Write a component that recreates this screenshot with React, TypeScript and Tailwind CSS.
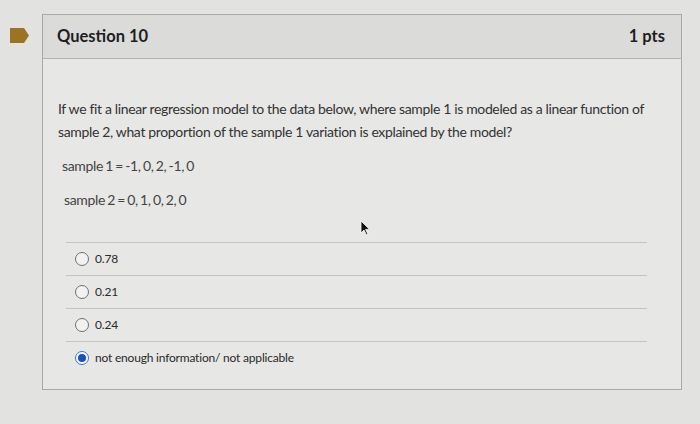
import { useState } from 'react';

const answers = ['0.78', '0.21', '0.24', 'not enough information/ not applicable'];

const Radio = ({ checked }: { checked: boolean }) => (
    <span
        className={`flex h-[14px] w-[14px] shrink-0 items-center justify-center rounded-full border ${checked ? 'border-[#3b6fd6] bg-white' : 'border-[#707070] bg-[#f2f2f0]'}`}
    >
        {checked && <span className="h-[8px] w-[8px] rounded-full bg-[#1a4fc4]" />}
    </span>
);

const Cursor = () => (
    <svg className="absolute left-[360px] top-[220px]" width="11" height="16" viewBox="0 0 11 16">
        <path d="M1 1 L1 13 L4 10 L6.5 15 L8 14.3 L5.6 9.4 L9.6 9.4 Z" fill="#111" stroke="#fff" strokeWidth="0.8" />
    </svg>
);

export default function App() {
    const [picked, setPicked] = useState(3);

    return (
        <div className="relative h-[424px] w-[700px] overflow-hidden bg-[#e2e2e0] font-['Lato','Liberation_Sans',sans-serif] text-[#2d2d2d]">
            <div className="flex pt-[14px]">
                {/* flag shown beside the question header */}
                <div className="w-[42px] shrink-0 pl-[10px] pt-[14px]">
                    <svg width="19" height="15" viewBox="0 0 19 15">
                        <path d="M0 0 H14 L19 7.5 L14 15 H0 Z" fill="#9b7322" />
                    </svg>
                </div>

                <div className="w-[640px] border border-[#a9a9a7] bg-[#e7e7e5]">
                    <div className="flex h-[44px] items-center justify-between border-b border-[#b4b4b2] bg-[#dbdbd9] pl-[14px] pr-[16px]">
                        <h2 className="text-[16.5px] font-bold text-[#1e1e1e]">Question 10</h2>
                        <span className="text-[16.5px] font-bold text-[#1e1e1e]">1 pts</span>
                    </div>

                    <div className="pl-[15px] pr-[30px] pt-[38px] pb-[15px] tracking-[-0.35px]">
                        <p className="text-[14px] leading-[23px] text-[#333]">
                            If we fit a linear regression model to the data below, where sample 1 is modeled as a linear function of sample 2, what
                            proportion of the sample 1 variation is explained by the model?
                        </p>
                        <p className="mt-[11px] pl-[4px] text-[14px] leading-[23px] text-[#444] [word-spacing:-1px]">sample 1 = -1, 0, 2, -1, 0</p>
                        <p className="mt-[11px] pl-[6px] text-[14px] leading-[23px] text-[#444] [word-spacing:-1px]">sample 2 = 0, 1, 0, 2, 0</p>

                        <div className="mt-[31px] ml-[8px] mr-[4px]">
                            {answers.map((a, i) => (
                                <label
                                    key={a}
                                    onClick={() => setPicked(i)}
                                    className="flex h-[33px] cursor-pointer items-center gap-[6px] border-t border-[#c4c4c2] pl-[9px] text-[12px] tracking-[-0.2px] text-[#2a2a2a]"
                                >
                                    <Radio checked={picked === i} />
                                    <span>{a}</span>
                                </label>
                            ))}
                        </div>
                    </div>
                </div>
            </div>
            <Cursor />
        </div>
    );
}
